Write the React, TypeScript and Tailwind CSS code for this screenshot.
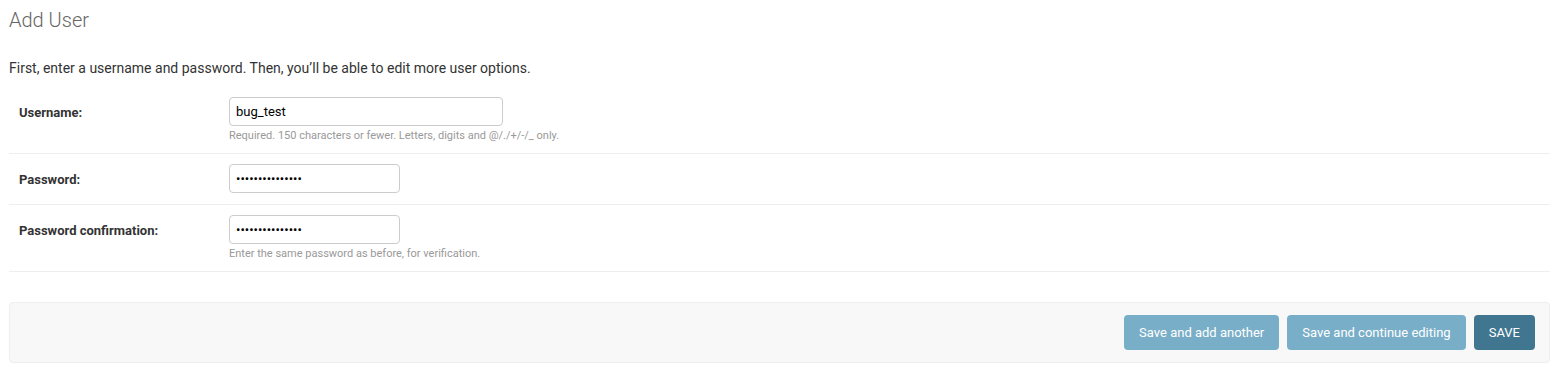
import React from 'react';

const font = { fontFamily: 'Roboto, "Liberation Sans", sans-serif' };

interface RowProps {
  label: string;
  children: React.ReactNode;
  help?: string;
}

const FormRow: React.FC<RowProps> = ({ label, children, help }) => (
  <div className="p-[10px] border-b border-[#eee] text-[13px]">
    <div className={`flex items-start ${help ? '' : 'min-h-[30px]'}`}>
      <label className="w-[210px] shrink-0 pt-[8px] font-bold text-[#333] text-[13px] leading-[16px]">
        {label}
      </label>
      {children}
    </div>
    {help && (
      <div className="ml-[210px] mt-[2px] text-[11px] leading-[15px] text-[#999]">{help}</div>
    )}
  </div>
);

export default function App() {
  const inputCls =
    'h-[29px] border border-[#ccc] rounded-[4px] px-[6px] text-[13px] text-black bg-white outline-none';

  return (
    <div className="bg-white min-h-[380px] pl-[9px] pr-[12px] pt-[8px]" style={font}>
      <h1 className="text-[20px] font-light text-[#666] leading-[24px] m-0">Add User</h1>
      <p className="mt-[27px] text-[14px] text-[#333] leading-[18px]">
        First, enter a username and password. Then, you’ll be able to edit more user options.
      </p>

      <div className="mt-[10px]">
        <FormRow label="Username:" help="Required. 150 characters or fewer. Letters, digits and @/./+/-/_ only.">
          <input className={`${inputCls} w-[274px]`} defaultValue="bug_test" style={font} />
        </FormRow>
        <FormRow label="Password:">
          <input type="password" className={`${inputCls} w-[171px]`} defaultValue="bugtestpassword" style={font} />
        </FormRow>
        <FormRow label="Password confirmation:" help="Enter the same password as before, for verification.">
          <input type="password" className={`${inputCls} w-[171px]`} defaultValue="bugtestpassword" style={font} />
        </FormRow>
      </div>

      <div className="mt-[30px] flex justify-end gap-[8px] bg-[#f8f8f8] border border-[#eee] rounded-[4px] py-[12px] pl-[14px] pr-[14px]">
        <button className="h-[35px] px-[15px] rounded-[4px] bg-[#79aec8] text-white text-[13px]">
          Save and add another
        </button>
        <button className="h-[35px] px-[15px] rounded-[4px] bg-[#79aec8] text-white text-[13px]">
          Save and continue editing
        </button>
        <button className="h-[35px] px-[15px] rounded-[4px] bg-[#417690] text-white text-[13px]">
          SAVE
        </button>
      </div>
    </div>
  );
}
